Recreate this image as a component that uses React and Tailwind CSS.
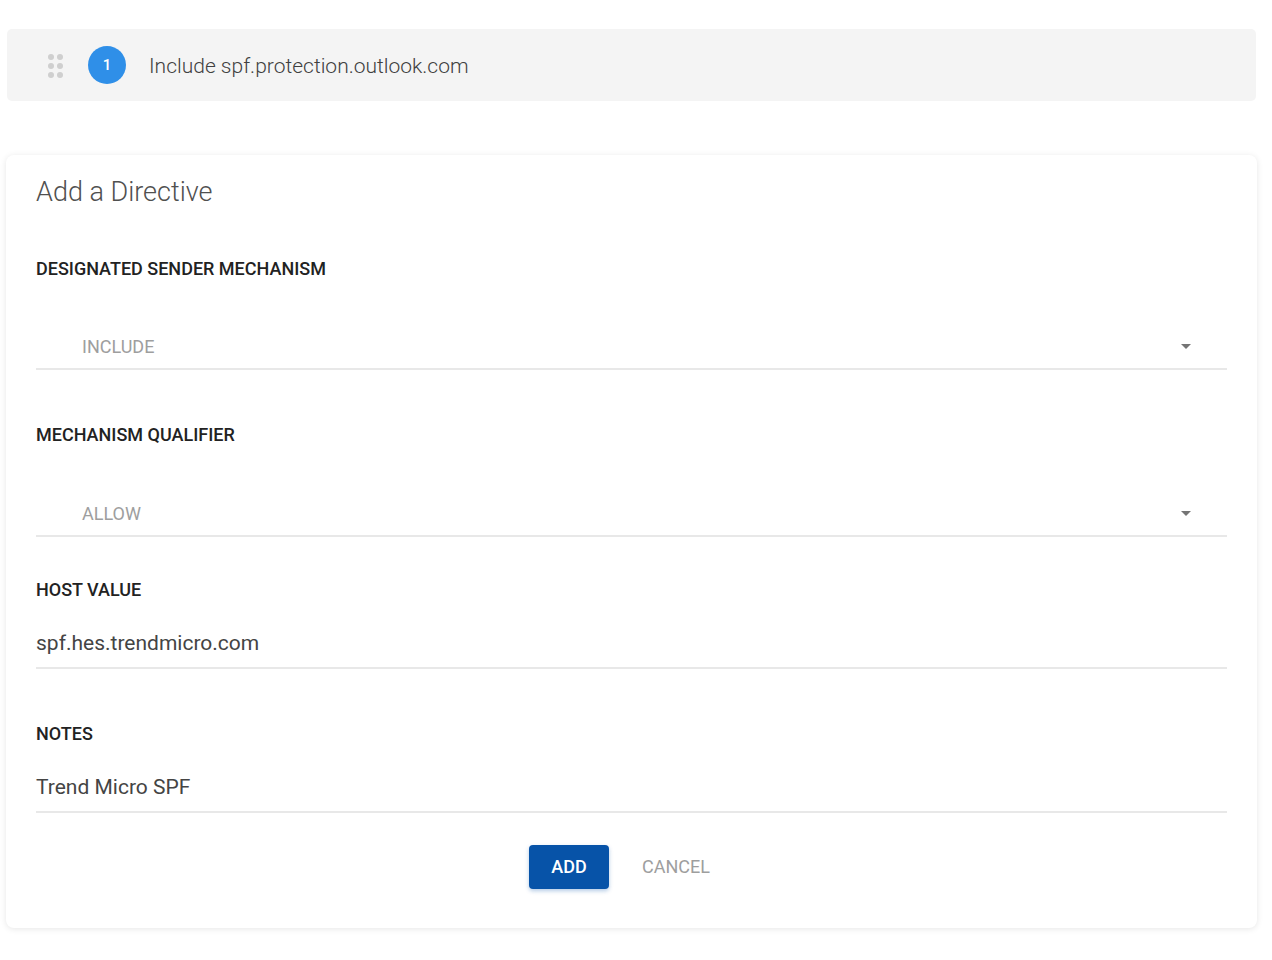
export default function App() {
  const font = { fontFamily: "Roboto, 'Liberation Sans', sans-serif" };
  const Caret = () => (
    <svg width="10" height="5" viewBox="0 0 10 5" className="mr-[36px]">
      <path d="M0 0 L10 0 L5 5 Z" fill="#757575" />
    </svg>
  );
  return (
    <div className="min-h-[960px] w-[1272px] bg-white" style={font}>
      <div className="pt-[29px] pl-[7px] pr-[16px]">
        <div className="h-[72px] rounded-[5px] bg-[#f4f4f4] flex items-center">
          <div className="ml-[41px] mt-[2px] grid grid-cols-2 gap-x-[3px] gap-y-[3px]">
            {[0, 1, 2, 3, 4, 5].map((i) => (
              <span key={i} className="block w-[6px] h-[6px] rounded-full bg-[#cfcfcf]" />
            ))}
          </div>
          <div className="ml-[25px] w-[38px] h-[38px] rounded-full bg-[#2f8fe8] flex items-center justify-center text-white text-[15px] font-medium">
            1
          </div>
          <div className="ml-[23px] mt-[2px] text-[21px] font-light text-[#404040] leading-none">
            Include spf.protection.outlook.com
          </div>
        </div>
      </div>

      <div className="mt-[54px] ml-[6px] mr-[15px] rounded-[8px] bg-white shadow-[0_1px_6px_rgba(0,0,0,0.10)] px-[30px] pb-[39px]">
        <div className="h-[72px] pt-[2px] flex items-center text-[27px] font-light text-[#505050]">
          Add a Directive
        </div>

        <div className="mt-[32px] h-[20px] leading-[20px] text-[18px] font-medium text-[#222]">
          DESIGNATED SENDER MECHANISM
        </div>
        <div className="mt-[45px] h-[46px] border-b-2 border-[#e8e8e8] flex items-center justify-between">
          <span className="ml-[46px] mt-[1px] text-[18px] text-[#9e9e9e]">INCLUDE</span>
          <Caret />
        </div>

        <div className="mt-[55px] h-[20px] leading-[20px] text-[18px] font-medium text-[#222]">
          MECHANISM QUALIFIER
        </div>
        <div className="mt-[46px] h-[46px] border-b-2 border-[#e8e8e8] flex items-center justify-between">
          <span className="ml-[46px] mt-[1px] text-[18px] text-[#9e9e9e]">ALLOW</span>
          <Caret />
        </div>

        <div className="mt-[43px] h-[20px] leading-[20px] text-[18px] font-medium text-[#222]">
          HOST VALUE
        </div>
        <div className="mt-[21px] h-[48px] border-b-2 border-[#e8e8e8] flex items-center">
          <span className="text-[21px] text-[#444]">spf.hes.trendmicro.com</span>
        </div>

        <div className="mt-[55px] h-[20px] leading-[20px] text-[18px] font-medium text-[#222]">
          NOTES
        </div>
        <div className="mt-[21px] h-[48px] border-b-2 border-[#e8e8e8] flex items-center">
          <span className="text-[21px] text-[#444]">Trend Micro SPF</span>
        </div>

        <div className="mt-[32px] flex justify-center items-center">
          <button className="ml-[-8px] w-[80px] h-[44px] pb-[2px] rounded-[4px] bg-[#0753a8] text-white text-[18px] font-medium shadow-[0_2px_4px_rgba(7,83,168,0.3)]">
            ADD
          </button>
          <button className="ml-[17px] h-[44px] pb-[2px] px-[16px] text-[18px] text-[#9e9e9e]">
            CANCEL
          </button>
        </div>
      </div>
    </div>
  );
}
